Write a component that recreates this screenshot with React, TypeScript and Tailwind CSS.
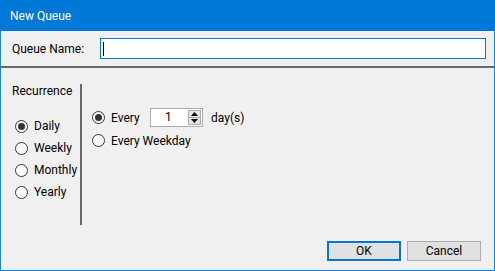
function Radio({ checked }: { checked?: boolean }) {
  return (
    <span className="flex h-[13px] w-[13px] shrink-0 items-center justify-center rounded-full border border-[#333333] bg-white">
      {checked && <span className="h-[7px] w-[7px] rounded-full bg-[#333333]" />}
    </span>
  )
}

function RadioRow({ label, checked }: { label: string; checked?: boolean }) {
  return (
    <div className="flex h-[22px] items-center gap-[6px]">
      <Radio checked={checked} />
      <span>{label}</span>
    </div>
  )
}

export default function App() {
  return (
    <div
      className="flex h-[271px] w-[495px] flex-col border-x border-b border-[#1883d7] bg-[#f0f0f0] text-[12px] text-black"
      style={{ fontFamily: 'Roboto, "Noto Sans", sans-serif' }}
    >
      {/* title bar */}
      <div className="-mx-px flex h-[31px] items-center bg-[#0078d7] pl-[10px] text-white">New Queue</div>

      {/* queue name */}
      <div className="flex h-[35px] items-center pl-[11px]">
        <span className="w-[88px]">Queue Name:</span>
        <div className="flex h-[21px] w-[386px] items-center border border-[#0078d7] bg-white pl-[2px]">
          <span className="h-[14px] w-px bg-black" />
        </div>
      </div>
      <div className="h-[2px] bg-[#696969]" />

      {/* recurrence */}
      <div className="flex h-[158px]">
        <div className="w-[79px] pl-[14px] pt-[15px]">
          <div className="-ml-[3px] leading-4">Recurrence</div>
          <div className="mt-[16px] flex flex-col">
            <RadioRow label="Daily" checked />
            <RadioRow label="Weekly" />
            <RadioRow label="Monthly" />
            <RadioRow label="Yearly" />
          </div>
        </div>
        <div className="mt-[16px] h-[141px] w-[2px] bg-[#696969]" />
        <div className="pl-[10px] pt-[40px]">
          <div className="flex h-[19px] items-center">
            <Radio checked />
            <span className="ml-[6px] w-[39px]">Every</span>
            <div className="flex h-[19px] w-[53px] border border-[#adadad] bg-white">
              <span className="flex-1 pl-[14px] leading-[17px]">1</span>
              <div className="my-px mr-px flex w-[13px] flex-col border border-[#adadad] bg-[#e5e5e5]">
                <div className="flex flex-1 items-center justify-center border-b border-[#adadad]">
                  <svg width="7" height="4" viewBox="0 0 7 4">
                    <path d="M0 4 L3.5 0 L7 4 Z" fill="#000" />
                  </svg>
                </div>
                <div className="flex flex-1 items-center justify-center">
                  <svg width="7" height="4" viewBox="0 0 7 4">
                    <path d="M0 0 L3.5 4 L7 0 Z" fill="#000" />
                  </svg>
                </div>
              </div>
            </div>
            <span className="ml-[8px]">day(s)</span>
          </div>
          <div className="mt-[4px] flex h-[19px] items-center gap-[6px]">
            <Radio />
            <span>Every Weekday</span>
          </div>
        </div>
      </div>

      {/* buttons */}
      <div className="mt-auto flex justify-end gap-[6px] pb-[9px] pr-[13px]">
        <button className="h-[20px] w-[74px] border-2 border-[#0078d7] bg-[#e1e1e1] leading-none">OK</button>
        <button className="h-[20px] w-[74px] border border-[#adadad] bg-[#e1e1e1] leading-none">Cancel</button>
      </div>
    </div>
  )
}
